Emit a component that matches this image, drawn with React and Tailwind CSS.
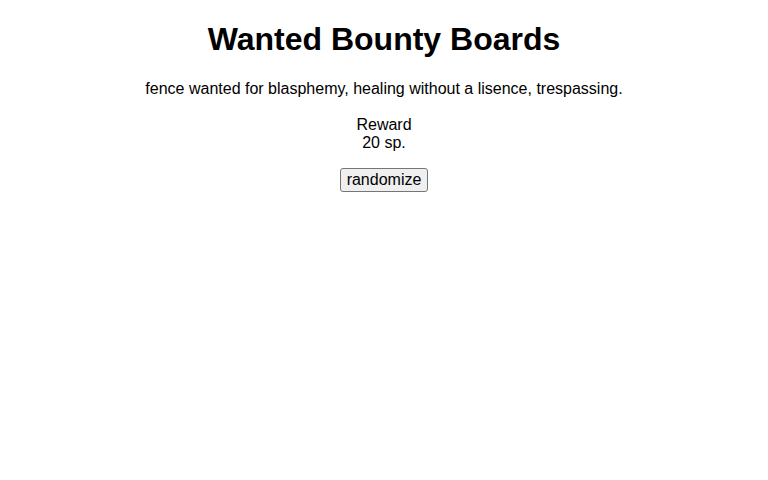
export default function App() {
  return (
    <div className="text-center text-black bg-white font-['Liberation_Sans',Arial,sans-serif] text-base leading-[normal]">
      <h1 className="text-[32px] font-bold my-[21.44px] leading-[normal]">Wanted Bounty Boards</h1>
      <p className="my-4">fence wanted for blasphemy, healing without a lisence, trespassing.</p>
      <p className="mt-[18px] mb-4">
        Reward
        <br />
        20 sp.
      </p>
      <div>
        <button className="h-6 px-[6px] border border-[#767676] bg-[#efefef] rounded-[3px] text-black text-base leading-[normal]">
          randomize
        </button>
      </div>
    </div>
  );
}
